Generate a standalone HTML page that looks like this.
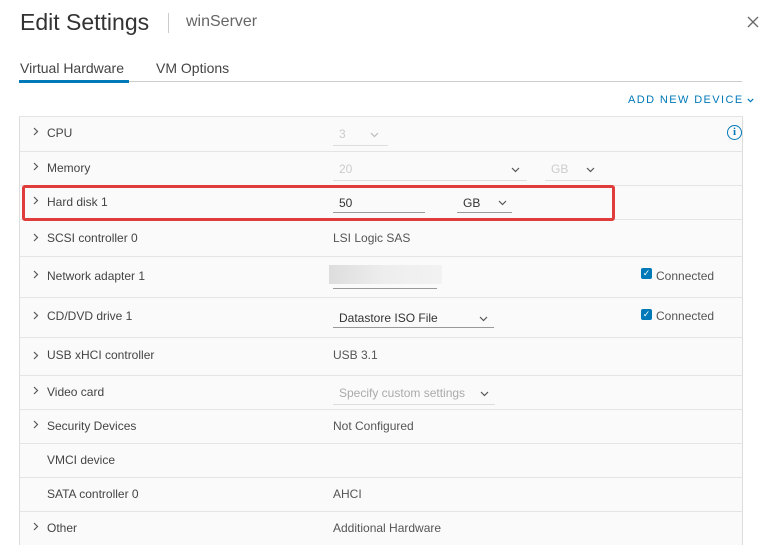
<!DOCTYPE html>
<html><head><meta charset="utf-8"><style>
*{margin:0;padding:0;box-sizing:border-box}
body{width:768px;height:557px;background:#fff;font-family:"Liberation Sans",sans-serif;position:relative;overflow:hidden;color:#333}
.a{position:absolute;white-space:nowrap}
.row{position:absolute;left:19px;width:724px;background:#fafafa;border-top:1px solid #e4e4e4;border-left:1px solid #ddd;border-right:1px solid #ddd}
.lbl{position:absolute;left:27px;font-size:12px;color:#444}
.chev{position:absolute;left:13px;width:6px;height:9px;transform:translateY(-3px)}
.val{position:absolute;left:313px;font-size:12px;color:#555}
.ul{position:absolute;border-bottom:1px solid #999}
.dis{color:#ccc}
.dn{position:absolute;width:9px;height:6px}
.cb{position:absolute;width:11px;height:11px;background:#0079b8;border-radius:2px;color:#fff;font-size:9px;line-height:11px;text-align:center}
</style></head><body>
<svg width="0" height="0" style="position:absolute"><defs>
<symbol id="r" viewBox="0 0 6 9"><path d="M1 1L4.5 4.5L1 8" fill="none" stroke="#555" stroke-width="1.2"/></symbol>
<symbol id="d" viewBox="0 0 9 6"><path d="M1 1L4.5 4.5L8 1" fill="none" stroke="#555" stroke-width="1.2"/></symbol>
<symbol id="dl" viewBox="0 0 9 6"><path d="M1 1L4.5 4.5L8 1" fill="none" stroke="#bbb" stroke-width="1.2"/></symbol>
</defs></svg>
<div class="a" style="left:20px;top:9px;font-size:23px;color:#333">Edit Settings</div>
<div class="a" style="left:168px;top:13px;width:1px;height:20px;background:#ccc"></div>
<div class="a" style="left:186px;top:13px;font-size:16px;color:#666">winServer</div>
<svg class="a" style="left:747px;top:16px" width="12" height="12"><path d="M1 1L11 11M11 1L1 11" stroke="#666" stroke-width="1.3"/></svg>
<div class="a" style="left:20px;top:60px;font-size:14px;color:#444">Virtual Hardware</div>
<div class="a" style="left:156px;top:60px;font-size:14px;color:#444">VM Options</div>
<div class="a" style="left:19px;top:81px;width:723px;height:1px;background:#ccc"></div>
<div class="a" style="left:19px;top:80px;width:110px;height:3px;background:#0079b8"></div>
<div class="a" style="left:628px;top:94px;font-size:11px;color:#0079b8;letter-spacing:1.4px">ADD NEW DEVICE</div>
<svg class="a" style="left:747px;top:98px" width="7" height="5" viewBox="0 0 9 6"><path d="M1 1L4.5 4.5L8 1" fill="none" stroke="#0079b8" stroke-width="1.5"/></svg>

<div class="row" style="top:116px;height:35px"><svg class="chev" style="top:13px"><use href="#r"/></svg><span class="lbl" style="top:9px">CPU</span><span class="val dis" style="top:10px;left:319px">3</span><svg class="dn" style="left:350px;top:15px"><use href="#dl"/></svg><div class="ul" style="left:313px;top:28px;width:55px;border-color:#ddd"></div>
<div class="a" style="left:707px;top:8px;width:15px;height:15px;border:1.5px solid #0079b8;border-radius:50%;color:#0079b8;font-size:11px;font-weight:bold;text-align:center;line-height:12px;font-family:'Liberation Serif',serif">i</div></div>
<div class="row" style="top:151px;height:34px"><svg class="chev" style="top:13px"><use href="#r"/></svg><span class="lbl" style="top:9px">Memory</span><span class="val dis" style="top:10px;left:319px">20</span><svg class="dn" style="left:491px;top:15px"><use href="#d"/></svg><div class="ul" style="left:313px;top:28px;width:194px;border-color:#ddd"></div><span class="a dis" style="left:531px;top:10px;font-size:12px">GB</span><svg class="dn" style="left:566px;top:15px"><use href="#d"/></svg><div class="ul" style="left:525px;top:28px;width:55px;border-color:#ddd"></div></div>
<div class="row" style="top:185px;height:34px"><svg class="chev" style="top:13px"><use href="#r"/></svg><span class="lbl" style="top:9px">Hard disk 1</span><span class="val" style="top:10px;left:319px;color:#333">50</span><div class="ul" style="left:313px;top:26px;width:92px"></div><span class="a" style="left:443px;top:10px;font-size:12px;color:#333">GB</span><svg class="dn" style="left:478px;top:14px"><use href="#d"/></svg><div class="ul" style="left:437px;top:26px;width:55px"></div></div>
<div class="row" style="top:219px;height:37px"><svg class="chev" style="top:16px"><use href="#r"/></svg><span class="lbl" style="top:11px">SCSI controller 0</span><span class="val" style="top:11px">LSI Logic SAS</span></div>
<div class="row" style="top:256px;height:41px"><svg class="chev" style="top:16px"><use href="#r"/></svg><span class="lbl" style="top:12px">Network adapter 1</span><div class="a" style="left:309px;top:8px;width:113px;height:19px;background:linear-gradient(90deg,#ddd,#eee,#f2f2f2)"></div><div class="ul" style="left:313px;top:31px;width:104px"></div><div class="cb" style="left:621px;top:11px">✓</div><span class="a" style="left:636px;top:12px;font-size:12px;color:#555">Connected</span></div>
<div class="row" style="top:297px;height:40px"><svg class="chev" style="top:16px"><use href="#r"/></svg><span class="lbl" style="top:11px">CD/DVD drive 1</span><span class="a" style="left:319px;top:13px;font-size:12px;color:#333">Datastore ISO File</span><svg class="dn" style="left:459px;top:18px"><use href="#d"/></svg><div class="ul" style="left:313px;top:29px;width:161px"></div><div class="cb" style="left:621px;top:11px">✓</div><span class="a" style="left:636px;top:11px;font-size:12px;color:#555">Connected</span></div>
<div class="row" style="top:337px;height:38px"><svg class="chev" style="top:16px"><use href="#r"/></svg><span class="lbl" style="top:10px">USB xHCI controller</span><span class="val" style="top:10px">USB 3.1</span></div>
<div class="row" style="top:375px;height:34px"><svg class="chev" style="top:13px"><use href="#r"/></svg><span class="lbl" style="top:9px">Video card</span><span class="a" style="left:319px;top:10px;font-size:12px;color:#aaa">Specify custom settings</span><svg class="dn" style="left:460px;top:15px"><use href="#d"/></svg><div class="ul" style="left:313px;top:28px;width:162px;border-color:#ddd"></div></div>
<div class="row" style="top:409px;height:34px"><svg class="chev" style="top:13px"><use href="#r"/></svg><span class="lbl" style="top:9px">Security Devices</span><span class="val" style="top:9px">Not Configured</span></div>
<div class="row" style="top:443px;height:34px"><span class="lbl" style="top:9px">VMCI device</span></div>
<div class="row" style="top:477px;height:34px"><span class="lbl" style="top:9px">SATA controller 0</span><span class="val" style="top:9px">AHCI</span></div>
<div class="row" style="top:511px;height:34px"><svg class="chev" style="top:13px"><use href="#r"/></svg><span class="lbl" style="top:9px">Other</span><span class="val" style="top:9px">Additional Hardware</span></div>

<div class="a" style="left:22px;top:185px;width:593px;height:36px;border:3px solid #e03c3c;border-radius:3px"></div>
</body></html>
